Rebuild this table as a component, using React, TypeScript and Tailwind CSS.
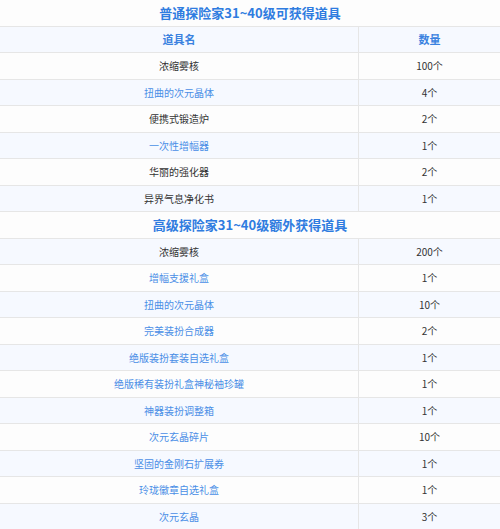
const section1 = [
  { name: "浓缩雾核", qty: "100个", link: false },
  { name: "扭曲的次元晶体", qty: "4个", link: true },
  { name: "便携式锻造炉", qty: "2个", link: false },
  { name: "一次性增幅器", qty: "1个", link: true },
  { name: "华丽的强化器", qty: "2个", link: false },
  { name: "异界气息净化书", qty: "1个", link: false },
]

const section2 = [
  { name: "浓缩雾核", qty: "200个", link: false },
  { name: "增幅支援礼盒", qty: "1个", link: true },
  { name: "扭曲的次元晶体", qty: "10个", link: true },
  { name: "完美装扮合成器", qty: "2个", link: true },
  { name: "绝版装扮套装自选礼盒", qty: "1个", link: true },
  { name: "绝版稀有装扮礼盒神秘袖珍罐", qty: "1个", link: true },
  { name: "神器装扮调整箱", qty: "1个", link: true },
  { name: "次元玄晶碎片", qty: "10个", link: true },
  { name: "坚固的金刚石扩展券", qty: "1个", link: true },
  { name: "玲珑徽章自选礼盒", qty: "1个", link: true },
  { name: "次元玄晶", qty: "3个", link: true },
]

function TitleRow({ text, shaded }: { text: string; shaded: boolean }) {
  return (
    <div
      className={`h-[26.5px] flex items-center justify-center border-b border-[#e6e6e6] text-[13px] font-bold text-[#2f7ce0] ${
        shaded ? "bg-[#f6f9ff]" : "bg-[#fdfdfd]"
      }`}
    >
      {text}
    </div>
  )
}

function Row({
  name,
  qty,
  link,
  shaded,
  header,
}: {
  name: string
  qty: string
  link?: boolean
  shaded: boolean
  header?: boolean
}) {
  const nameColor = header ? "text-[#3a82e0] font-bold text-[11px]" : link ? "text-[#4a8ee6]" : "text-[#333333]"
  const qtyColor = header ? "text-[#3a82e0] font-bold text-[11px]" : "text-[#333333]"
  return (
    <div
      className={`h-[26.5px] grid grid-cols-[359px_1fr] border-b border-[#e6e6e6] text-[10px] ${
        shaded ? "bg-[#f6f9ff]" : "bg-[#fdfdfd]"
      }`}
    >
      <div className={`flex items-center justify-center border-r border-[#e6e6e6] ${nameColor}`}>{name}</div>
      <div className={`flex items-center justify-center ${qtyColor}`}>{qty}</div>
    </div>
  )
}

export default function App() {
  let i = 0
  const next = () => i++ % 2 === 1
  return (
    <div
      className="w-[500px] h-[529px] overflow-hidden bg-white"
      style={{ fontFamily: '"Noto Sans CJK SC", "Noto Sans", sans-serif' }}
    >
      <TitleRow text="普通探险家31~40级可获得道具" shaded={next()} />
      <Row name="道具名" qty="数量" header shaded={next()} />
      {section1.map((r) => (
        <Row key={"a" + r.name} name={r.name} qty={r.qty} link={r.link} shaded={next()} />
      ))}
      <TitleRow text="高级探险家31~40级额外获得道具" shaded={next()} />
      {section2.map((r) => (
        <Row key={"b" + r.name} name={r.name} qty={r.qty} link={r.link} shaded={next()} />
      ))}
    </div>
  )
}
